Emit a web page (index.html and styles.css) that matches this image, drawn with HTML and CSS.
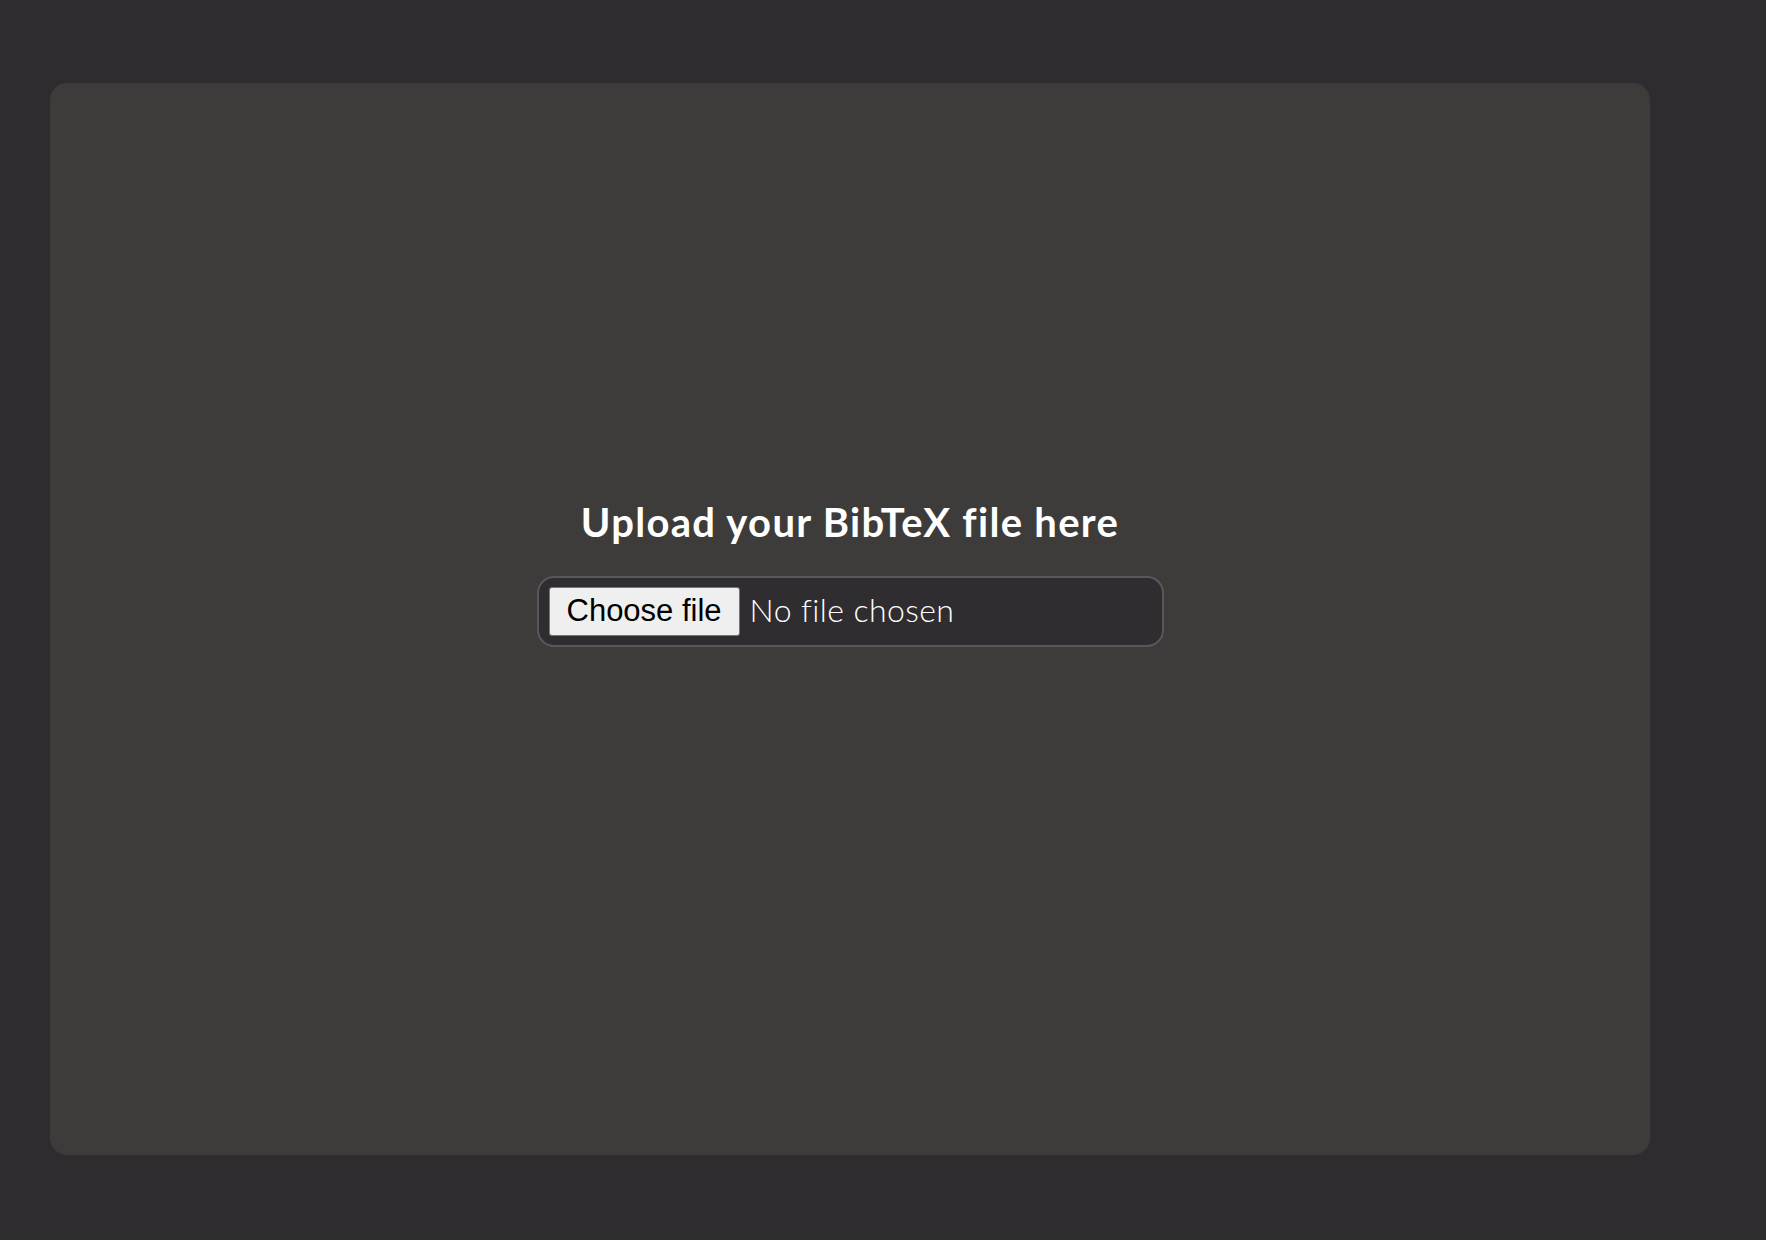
FILE: index.html
```html
<!DOCTYPE html>
<html lang="en">
<head>
<meta charset="utf-8">
<title>BibTeX upload</title>
<link rel="stylesheet" href="styles.css">
</head>
<body>
<main class="page">
  <section class="card">
    <h1 class="title">Upload your BibTeX file here</h1>
    <label class="file-field">
      <input class="file-native" type="file" accept=".bib">
      <span class="file-button">Choose file</span>
      <span class="file-name">No file chosen</span>
    </label>
  </section>
</main>
</body>
</html>
```

FILE: styles.css
```css
html, body {
  margin: 0;
  padding: 0;
  background: #2e2c2f;
}

.page {
  padding: 83px 0 0 50px;
}

.card {
  box-sizing: border-box;
  width: 1600px;
  height: 1072px;
  background: #3d3c3a;
  border-radius: 17px;
  display: flex;
  flex-direction: column;
  align-items: center;
  justify-content: center;
  padding-bottom: 94px;
}

.title {
  margin: 0 0 30px 0;
  font-family: Lato, "Noto Sans", sans-serif;
  font-weight: 700;
  font-size: 40px;
  line-height: 48px;
  letter-spacing: 1.3px;
  color: #ffffff;
}

.file-field {
  box-sizing: border-box;
  width: 627px;
  height: 71px;
  padding: 0 10px;
  border: 2px solid #58575b;
  border-radius: 17px;
  background: #2f2d30;
  display: flex;
  align-items: center;
  gap: 10px;
  cursor: pointer;
}

.file-native {
  position: absolute;
  width: 1px;
  height: 1px;
  opacity: 0;
  overflow: hidden;
}

.file-button {
  box-sizing: border-box;
  height: 49px;
  padding: 0 17px;
  display: flex;
  align-items: center;
  font-family: "Liberation Sans", Arial, sans-serif;
  font-size: 31px;
  color: #000000;
  background: #efefef;
  border: 1px solid #767676;
  border-radius: 3px;
}

.file-name {
  padding-bottom: 3px;
  font-family: Lato, "Noto Sans", sans-serif;
  font-size: 32px;
  font-weight: 300;
  letter-spacing: 0.4px;
  color: #ffffff;
}
```
